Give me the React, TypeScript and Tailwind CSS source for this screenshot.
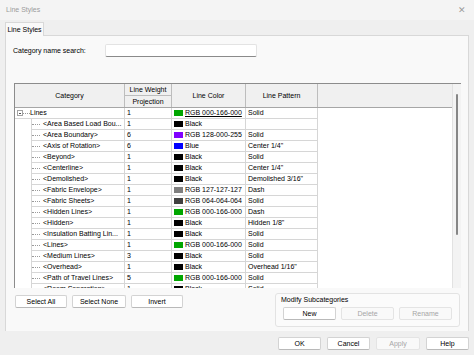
import React from "react"
import clsx from "clsx"

interface LineRow {
  name: string
  weight: string
  color: string
  swatch: string
  pattern: string
}

const rows: LineRow[] = [
  { name: "<Area Based Load Bou...", weight: "1", color: "Black", swatch: "bg-black", pattern: "" },
  { name: "<Area Boundary>", weight: "6", color: "RGB 128-000-255", swatch: "bg-[#8000ff]", pattern: "Solid" },
  { name: "<Axis of Rotation>", weight: "6", color: "Blue", swatch: "bg-[#0000ff]", pattern: 'Center 1/4"' },
  { name: "<Beyond>", weight: "1", color: "Black", swatch: "bg-black", pattern: "Solid" },
  { name: "<Centerline>", weight: "1", color: "Black", swatch: "bg-black", pattern: 'Center 1/4"' },
  { name: "<Demolished>", weight: "1", color: "Black", swatch: "bg-black", pattern: 'Demolished 3/16"' },
  { name: "<Fabric Envelope>", weight: "1", color: "RGB 127-127-127", swatch: "bg-[#7f7f7f]", pattern: "Dash" },
  { name: "<Fabric Sheets>", weight: "1", color: "RGB 064-064-064", swatch: "bg-[#404040]", pattern: "Solid" },
  { name: "<Hidden Lines>", weight: "1", color: "RGB 000-166-000", swatch: "bg-[#00a600]", pattern: "Dash" },
  { name: "<Hidden>", weight: "1", color: "Black", swatch: "bg-black", pattern: 'Hidden 1/8"' },
  { name: "<Insulation Batting Lin...", weight: "1", color: "Black", swatch: "bg-black", pattern: "Solid" },
  { name: "<Lines>", weight: "1", color: "RGB 000-166-000", swatch: "bg-[#00a600]", pattern: "Solid" },
  { name: "<Medium Lines>", weight: "3", color: "Black", swatch: "bg-black", pattern: "Solid" },
  { name: "<Overhead>", weight: "1", color: "Black", swatch: "bg-black", pattern: 'Overhead 1/16"' },
  { name: "<Path of Travel Lines>", weight: "5", color: "RGB 000-166-000", swatch: "bg-[#00a600]", pattern: "Solid" },
  { name: "<Room Separation>", weight: "1", color: "Black", swatch: "bg-black", pattern: "Solid" },
]

const Btn = ({ label, w, disabled }: { label: string; w: string; disabled?: boolean }) => (
  <div
    className={clsx(
      "flex h-[13px] shrink-0 items-center justify-center rounded-[2px] border",
      w,
      disabled
        ? "border-[#e4e4e4] bg-[#f9f9f9] text-[#a6a6a6]"
        : "border-[#d3d3d3] border-b-[#b9b9b9] bg-white text-black"
    )}
  >
    {label}
  </div>
)

const ValueCells = ({ row, underline }: { row: LineRow; underline?: boolean }) => (
  <>
    <div className="flex h-full w-[47px] shrink-0 items-center border-r border-b border-[#d6d6d6] pl-[2px]">
      {row.weight}
    </div>
    <div className="flex h-full w-[74px] shrink-0 items-center border-r border-b border-[#d6d6d6] pl-[2px]">
      <span className={clsx("h-[6px] w-[9px] shrink-0", row.swatch)} />
      <span className={clsx("ml-[2px] whitespace-nowrap", underline && "underline underline-offset-1")}>{row.color}</span>
    </div>
    <div className="flex h-full w-[72px] shrink-0 items-center border-r border-b border-[#d6d6d6] pl-[2px] whitespace-nowrap">
      {row.pattern}
    </div>
    <div className="h-full flex-1" />
  </>
)

export default function App() {
  return (
    <div className="h-[355px] w-[474px] overflow-hidden bg-[#efefef] font-['Liberation_Sans',Arial,sans-serif] text-[7px] leading-[10px] text-black">
      {/* title bar */}
      <div className="flex h-[20px] items-center justify-between bg-[#f4f4f4] pl-[6px] pr-[8px]">
        <span className="text-[#9c9c9c]">Line Styles</span>
        <span className="text-[9px] text-[#9c9c9c]">✕</span>
      </div>

      {/* tab strip */}
      <div className="flex h-[15px] items-end pl-[5px]">
        <div className="relative z-10 mb-[-1px] flex h-[14px] w-[39px] items-center justify-center border border-b-0 border-[#d8d8d8] bg-[#f9f9f9]">
          Line Styles
        </div>
      </div>

      {/* tab panel */}
      <div className="ml-[5px] h-[296px] w-[464px] border-x border-t border-[#d8d8d8] bg-[#f9f9f9]">
        <div className="mt-[8px] flex items-center pl-[7px]">
          <span className="w-[92px]">Category name search:</span>
          <div className="h-[13px] w-[152px] rounded-[2px] border border-[#e3e3e3] border-b-[#8a8a8a] bg-white" />
        </div>

        {/* grid */}
        <div className="mt-[26px] ml-[8px] flex h-[205px] w-[447px] overflow-hidden border-t border-l border-[#8c8c8c] bg-white">
          <div className="w-[437px] shrink-0">
            <div className="flex h-[24px] border-b border-[#a6a6a6] bg-[#f0f0f0]">
              <div className="flex w-[110px] shrink-0 items-center justify-center border-r border-[#bdbdbd]">Category</div>
              <div className="flex w-[47px] shrink-0 flex-col border-r border-[#bdbdbd]">
                <div className="flex h-[12px] items-center justify-center border-b border-[#bdbdbd]">Line Weight</div>
                <div className="flex flex-1 items-center justify-center">Projection</div>
              </div>
              <div className="flex w-[74px] shrink-0 items-center justify-center border-r border-[#bdbdbd]">Line Color</div>
              <div className="flex w-[72px] shrink-0 items-center justify-center border-r border-[#bdbdbd]">Line Pattern</div>
              <div className="flex-1" />
            </div>

            <div className="flex h-[11px]">
              <div className="flex h-full w-[110px] shrink-0 items-center border-r border-b border-[#d6d6d6]">
                <span className="ml-[2px] flex h-[6px] w-[6px] items-center justify-center border border-[#a3a3a3]">
                  <span className="h-px w-[2px] bg-[#505050]" />
                </span>
                <span className="w-[7px] border-t border-dotted border-[#9a9a9a]" />
                <span>Lines</span>
              </div>
              <ValueCells
                row={{ name: "Lines", weight: "1", color: "RGB 000-166-000", swatch: "bg-[#00a600]", pattern: "Solid" }}
                underline
              />
            </div>

            {rows.map((row) => (
              <div key={row.name} className="flex h-[11px]">
                <div className="flex h-full w-[110px] shrink-0 border-r border-[#d6d6d6]">
                  <div className="h-full w-[17px] shrink-0 border-r border-[#d6d6d6]" />
                  <div className="flex h-full flex-1 items-center border-b border-[#d6d6d6]">
                    <span className="w-[8px] border-t border-dotted border-[#9a9a9a]" />
                    <span className="ml-[3px] whitespace-nowrap">{row.name}</span>
                  </div>
                </div>
                <ValueCells row={row} />
              </div>
            ))}
          </div>

          {/* scrollbar */}
          <div className="relative h-full w-[10px] shrink-0 border-l border-[#e2e2e2] bg-[#f3f3f3]">
            <div className="absolute left-[3px] top-[10px] h-[141px] w-[2px] rounded-full bg-[#868686]" />
          </div>
        </div>

        {/* grid buttons + subcategories */}
        <div className="mt-[7px] flex items-start pl-[9px] pr-[8px]">
          <div className="flex gap-[5px]">
            <Btn label="Select All" w="w-[52px]" />
            <Btn label="Select None" w="w-[54px]" />
            <Btn label="Invert" w="w-[52px]" />
          </div>
          <div className="ml-auto -mt-[2px] h-[34px] w-[185px] rounded-[3px] border border-[#e3e3e3] bg-[#fbfbfb]">
            <div className="pl-[5px] pt-[1px]">Modify Subcategories</div>
            <div className="mt-[2px] flex gap-[5px] pl-[7px]">
              <Btn label="New" w="w-[53px]" />
              <Btn label="Delete" w="w-[53px]" disabled />
              <Btn label="Rename" w="w-[53px]" disabled />
            </div>
          </div>
        </div>
      </div>

      {/* dialog buttons */}
      <div className="mt-[6px] flex justify-end gap-[6px] pr-[5px]">
        <Btn label="OK" w="w-[43px]" />
        <Btn label="Cancel" w="w-[43px]" />
        <Btn label="Apply" w="w-[44px]" disabled />
        <Btn label="Help" w="w-[43px]" />
      </div>
    </div>
  )
}
